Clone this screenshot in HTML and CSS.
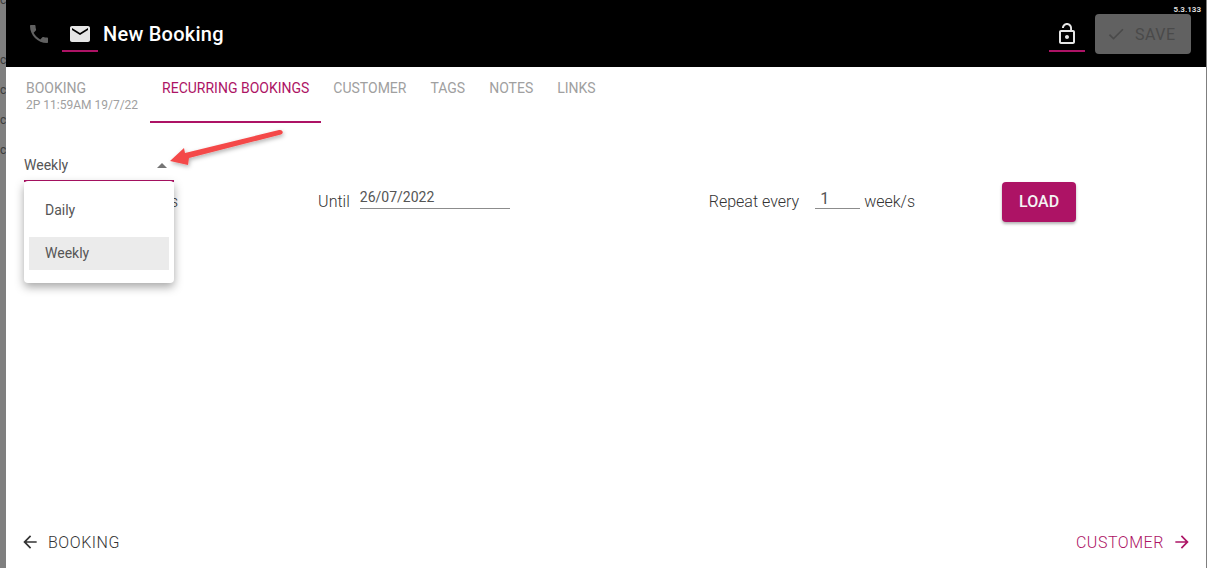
FILE: index.html
```html
<!DOCTYPE html>
<html lang="en">
<head>
  <meta charset="UTF-8" />
  <title>New Booking</title>
  <link rel="stylesheet" href="styles.css">
</head>
<body>
  <div class="backdrop">
    <span>c</span><span>c1</span><span>c</span><span>c1</span><span>c</span>
  </div>
  <div class="dialog">
    <header class="topbar">
      <div class="mode-icon mode-phone">
        <svg width="24" height="24" viewBox="0 0 24 24"><path fill="#616161" d="M6.62 10.79c1.44 2.83 3.76 5.14 6.59 6.59l2.2-2.2c.27-.27.67-.36 1.02-.24 1.12.37 2.33.57 3.57.57.55 0 1 .45 1 1V20c0 .55-.45 1-1 1-9.39 0-17-7.61-17-17 0-.55.45-1 1-1h3.5c.55 0 1 .45 1 1 0 1.25.2 2.45.57 3.57.11.35.03.74-.25 1.02l-2.2 2.2z"/></svg>
      </div>
      <div class="mode-icon mode-active">
        <svg width="24" height="24" viewBox="0 0 24 24"><path fill="#e6e6e6" d="M20 4H4c-1.1 0-1.99.9-1.99 2L2 18c0 1.1.9 2 2 2h16c1.1 0 2-.9 2-2V6c0-1.1-.9-2-2-2zm0 4l-8 5-8-5V6l8 5 8-5v2z"/></svg>
      </div>
      <h1 class="title">New Booking</h1>
      <div class="topbar-right">
        <div class="mode-icon mode-active">
          <svg width="24" height="24" viewBox="0 0 24 24"><path fill="#e6e6e6" d="M12 17c1.1 0 2-.9 2-2s-.9-2-2-2-2 .9-2 2 .9 2 2 2zm6-9h-1V6c0-2.76-2.24-5-5-5S7 3.24 7 6h1.9c0-1.71 1.39-3.1 3.1-3.1 1.71 0 3.1 1.39 3.1 3.1v2H6c-1.1 0-2 .9-2 2v10c0 1.1.9 2 2 2h12c1.1 0 2-.9 2-2V10c0-1.1-.9-2-2-2zm0 12H6V10h12v10z"/></svg>
        </div>
        <button class="save-btn" type="button">
          <svg width="20" height="20" viewBox="0 0 24 24"><path fill="#4a4a4a" d="M9 16.17 4.83 12l-1.42 1.41L9 19 21 7l-1.41-1.41z"/></svg>
          SAVE
        </button>
      </div>
      <span class="version">5.3.133</span>
    </header>

    <nav class="tabs">
      <div class="tab tab-first">BOOKING<small>2P 11:59AM 19/7/22</small></div>
      <div class="tab tab-active">RECURRING BOOKINGS</div>
      <div class="tab">CUSTOMER</div>
      <div class="tab">TAGS</div>
      <div class="tab">NOTES</div>
      <div class="tab">LINKS</div>
    </nav>

    <main class="content">
      <div class="select-box">
        <span>Weekly</span>
        <i class="caret"></i>
      </div>
      <div class="form-row">
        <span class="peek">s</span>
        <div class="field field-until">
          <label>Until</label>
          <div class="line-input until-input">26/07/2022</div>
        </div>
        <div class="field field-repeat">
          <label>Repeat every</label>
          <div class="line-input repeat-input">1</div>
          <label>week/s</label>
        </div>
        <button class="load-btn" type="button">LOAD</button>
      </div>

      <ul class="menu">
        <li>Daily</li>
        <li class="menu-selected">Weekly</li>
      </ul>

      <svg class="arrow" width="130" height="50" viewBox="0 0 130 50">
        <defs>
          <filter id="arrowShadow" x="-20%" y="-40%" width="140%" height="200%">
            <feDropShadow dx="1" dy="2" stdDeviation="2" flood-color="#000" flood-opacity="0.3"/>
          </filter>
        </defs>
        <path filter="url(#arrowShadow)" fill="#f44a4a" d="M5 33 L19 20 L20 25 L114 2 C118 1.2 119 5.4 116 6.4 L24 30 L23 37 Z"/>
      </svg>
    </main>

    <footer class="bottom-nav">
      <div class="nav-link">
        <svg width="20" height="20" viewBox="0 0 24 24"><path fill="#333" d="M20 11H7.83l5.59-5.59L12 4l-8 8 8 8 1.41-1.41L7.83 13H20v-2z"/></svg>
        BOOKING
      </div>
      <div class="nav-link nav-next">
        CUSTOMER
        <svg width="20" height="20" viewBox="0 0 24 24"><path fill="#ad1465" d="m12 4-1.41 1.41L16.17 11H4v2h12.17l-5.58 5.59L12 20l8-8z"/></svg>
      </div>
    </footer>
  </div>
</body>
</html>
```

FILE: styles.css
```css
:root {
  --primary: #ad1365;
  --muted: #a0a0a0;
  --text: #555;
}

* {
  box-sizing: border-box;
}

html, body {
  height: 100%;
}

body {
  margin: 0;
  display: flex;
  overflow: hidden;
  background: #7f7f7f;
  font-family: Roboto, "Liberation Sans", sans-serif;
  color: var(--text);
}

.backdrop {
  width: 6px;
  flex: none;
  overflow: hidden;
  font-size: 12px;
  line-height: 30px;
  color: #3c3c3c;
}

.backdrop span {
  display: block;
}

.backdrop span:first-child {
  margin: -15px 0 30px;
}

.dialog {
  width: 1200px;
  height: 568px;
  flex: none;
  display: flex;
  flex-direction: column;
  background: #fff;
}

/* top bar */
.topbar {
  height: 67px;
  flex: none;
  display: flex;
  align-items: flex-start;
  padding: 14px 15px 0 21px;
  background: #000;
  position: relative;
}

.mode-icon {
  width: 36px;
  height: 36px;
  margin-top: 2px;
  padding-top: 6px;
  display: flex;
  justify-content: center;
  border-bottom: 2px solid transparent;
}

.mode-phone {
  width: 24px;
  margin-right: 11px;
}

.mode-active {
  border-bottom-color: var(--primary);
}

.title {
  margin: 7px 0 0 5px;
  font-size: 20px;
  line-height: 27px;
  font-weight: 500;
  letter-spacing: 0.25px;
  color: #fff;
}

.topbar-right {
  margin-left: auto;
  display: flex;
  gap: 10px;
}

.save-btn {
  width: 96px;
  height: 40px;
  display: flex;
  align-items: center;
  gap: 9px;
  padding: 0 0 0 11px;
  border: none;
  border-radius: 4px;
  background: #616161;
  color: #4a4a4a;
  font-family: inherit;
  font-size: 16px;
  letter-spacing: 0.5px;
}

.version {
  position: absolute;
  top: 5px;
  right: 5px;
  font-size: 8px;
  font-weight: 700;
  color: #ddd;
}

/* tabs */
.tabs {
  height: 56px;
  flex: none;
  display: flex;
  padding-left: 8px;
}

.tab {
  padding: 13px 12px 0;
  font-size: 14px;
  color: var(--muted);
  line-height: 16px;
}

.tab small {
  display: block;
  font-size: 12px;
  line-height: 19px;
}

.tab-active {
  color: var(--primary);
  border-bottom: 2px solid var(--primary);
}

/* form */
.content {
  flex: 1;
  position: relative;
  padding: 0 18px;
}

.select-box {
  width: 150px;
  height: 37px;
  margin-top: 22px;
  padding: 12px 0 0;
  display: flex;
  justify-content: space-between;
  font-size: 14px;
  line-height: 16px;
  border-bottom: 2px solid var(--primary);
}

.caret {
  width: 0;
  height: 0;
  margin: 6px 7px 0 0;
  border: 5px solid transparent;
  border-top: none;
  border-bottom-color: #757575;
}

.form-row {
  display: flex;
  align-items: center;
  height: 42px;
  margin-top: -1px;
  font-size: 16px;
  font-weight: 300;
  color: #333;
}

.peek {
  margin: 0 0 2px 146px;
}

.field {
  display: flex;
  align-items: center;
  margin-bottom: 2px;
}

.field-until {
  margin-left: 140px;
}

.until-input {
  width: 150px;
  margin-left: 10px;
  color: var(--text);
}

.field-repeat {
  margin-left: 199px;
}

.line-input {
  height: 20px;
  margin-bottom: 4px;
  font-size: 14px;
  font-weight: 400;
  line-height: 16px;
  border-bottom: 1px solid #8c8c8c;
}

.repeat-input {
  width: 45px;
  margin-right: 4px;
  margin-left: 16px;
  padding-left: 5px;
  font-size: 16px;
  line-height: 19px;
  color: var(--text);
}

.load-btn {
  width: 74px;
  height: 40px;
  margin-left: 87px;
  padding: 0 0 2px;
  border: none;
  border-radius: 4px;
  background: var(--primary);
  color: #f4f4f4;
  font-family: inherit;
  font-size: 16px;
  font-weight: 500;
  box-shadow: 0 2px 3px rgba(0, 0, 0, 0.3);
}

/* open dropdown */
.menu {
  position: absolute;
  top: 58px;
  left: 18px;
  width: 150px;
  height: 102px;
  margin: 0;
  padding: 13px 5px 0;
  list-style: none;
  background: #fff;
  border-radius: 4px;
  box-shadow: 0 4px 10px rgba(0, 0, 0, 0.35);
  font-size: 14px;
}

.menu li {
  height: 33px;
  padding-left: 16px;
  line-height: 33px;
  margin-bottom: 10px;
}

.menu-selected {
  background: #ebebeb;
}

.arrow {
  position: absolute;
  top: 5px;
  left: 159px;
}

/* bottom nav */
.bottom-nav {
  height: 52px;
  flex: none;
  display: flex;
  justify-content: space-between;
  align-items: center;
  padding: 0 14px;
  font-size: 16px;
  font-weight: 300;
  letter-spacing: 0.55px;
  color: #333;
}

.nav-link {
  display: flex;
  align-items: center;
  gap: 8px;
}

.nav-next {
  color: var(--primary);
}
```
